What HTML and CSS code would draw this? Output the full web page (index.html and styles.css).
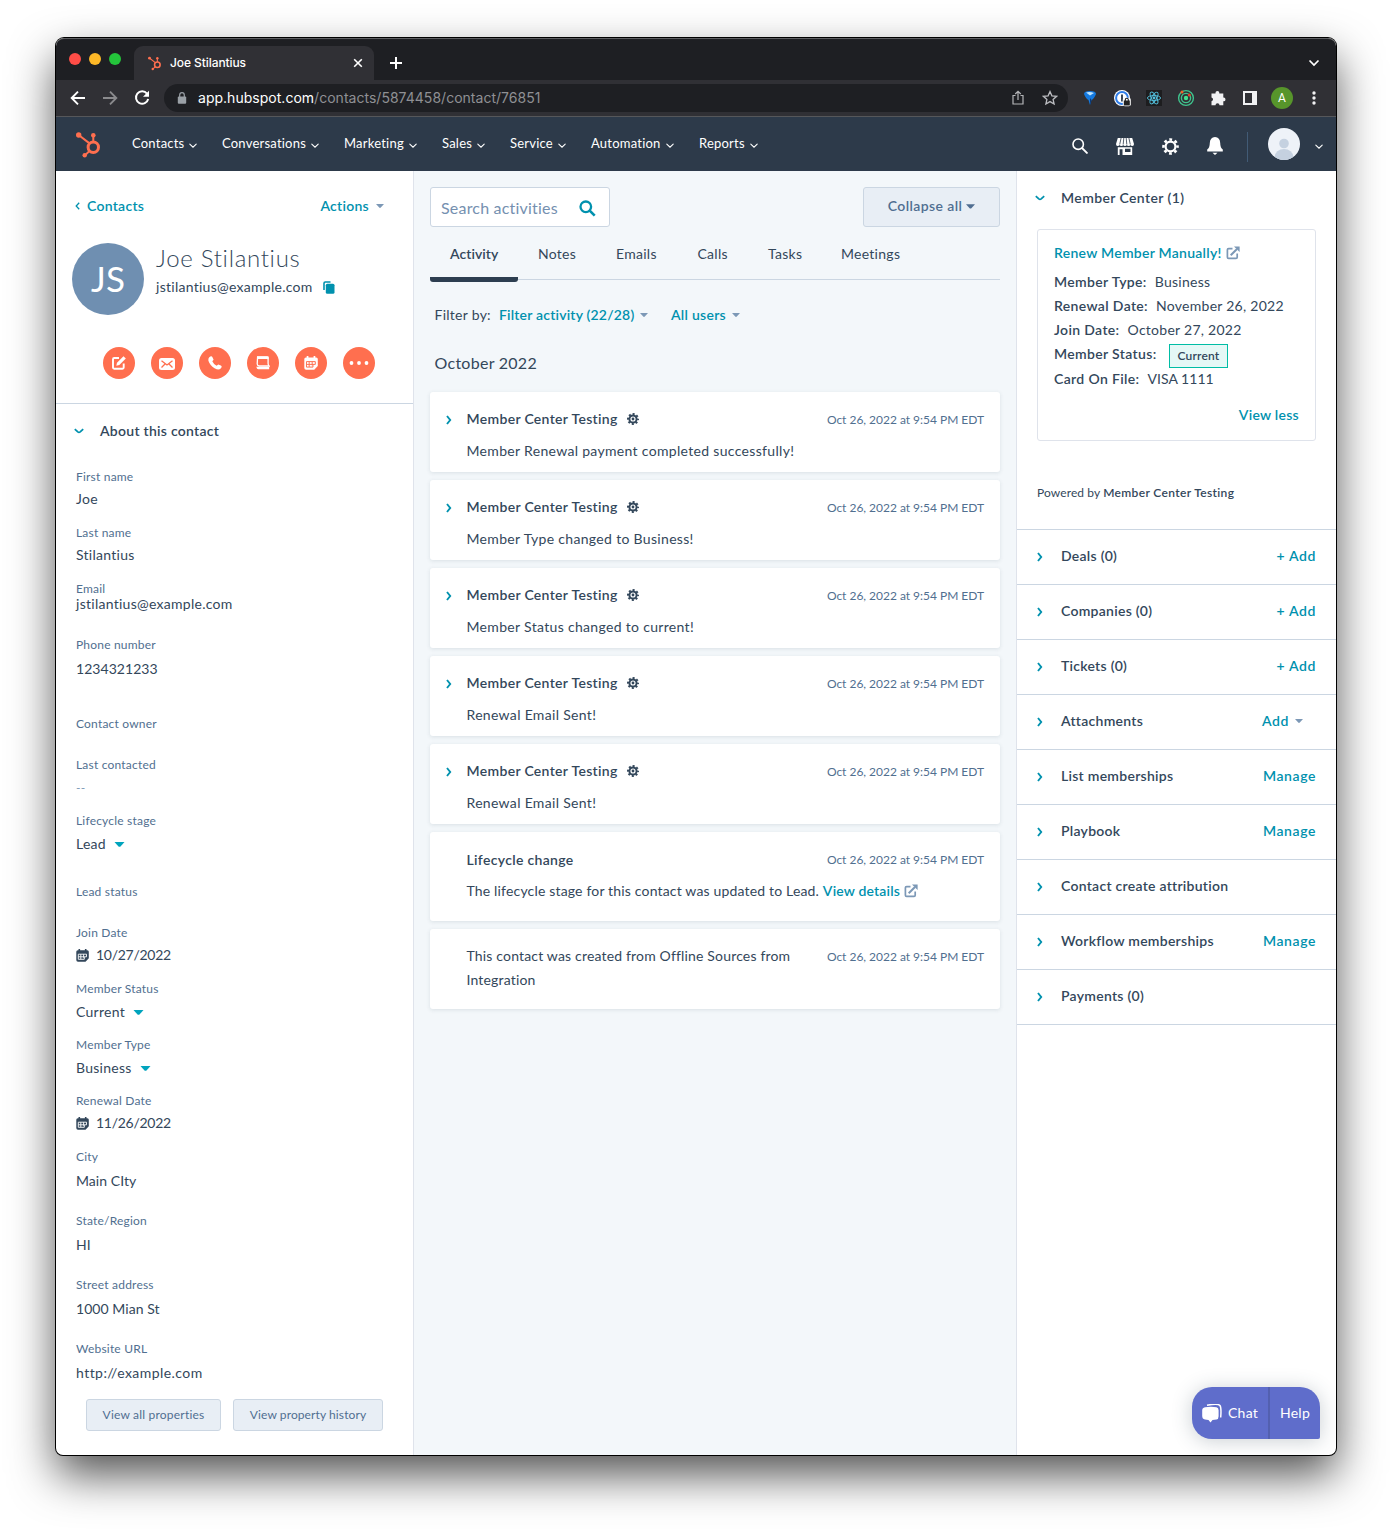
FILE: index.html
```html
<!DOCTYPE html>
<html lang="en">
<head>
<meta charset="utf-8">
<title>Joe Stilantius</title>
<link rel="stylesheet" href="styles.css">
</head>
<body>
<svg class="defs" width="0" height="0" aria-hidden="true">
  <symbol id="sprocket" viewBox="0 0 28 28"><g fill="none" stroke="#ff6f4f"><circle cx="19.3" cy="16.3" r="5.2" stroke-width="3"/><path d="M5 4.2l10.5 8.2M19.3 4.5V11M15.5 20l-4.6 4.4" stroke-width="2"/></g><g fill="#ff6f4f"><circle cx="4.7" cy="4" r="2.7"/><circle cx="19.3" cy="4.3" r="2.3"/><circle cx="10.7" cy="24.3" r="2.2"/></g></symbol>
  <symbol id="chev-down" viewBox="0 0 10 6"><path d="M.8 1.200L3.800 3.900Q5 4.900 6.200 3.900L9.200 1.200" fill="none" stroke="currentColor" stroke-width="1.800"/></symbol>
  <symbol id="nav-down" viewBox="0 0 8 6"><path d="M.8 1.200L4 4.200l3.200-3" fill="none" stroke="currentColor" stroke-width="1.100" stroke-linecap="round"/></symbol>
  <symbol id="chev-right" viewBox="0 0 6 10"><path d="M1 1l3.200 4L1 9" fill="none" stroke="currentColor" stroke-width="1.900"/></symbol>
  <symbol id="caret" viewBox="0 0 10 5"><path d="M0 0h10L6 4.400q-1 .9-2 0z" fill="currentColor"/></symbol>
  <symbol id="external" viewBox="0 0 14 14"><path d="M6.500 2.600H2.600Q1.400 2.600 1.400 3.800v7.400q0 1.200 1.200 1.200H10q1.200 0 1.200-1.200V7.600" fill="none" stroke="currentColor" stroke-width="1.700"/><path d="M4.700 9.300L11 3" stroke="currentColor" stroke-width="2"/><path d="M8 .4h5.600V6z" fill="currentColor"/></symbol>
  <symbol id="calendar" viewBox="0 0 13 13"><path d="M2.500 0h1.600v1.300h4.800V0h1.600v1.300h.8q1.500 0 1.500 1.500v6.400L9.500 12.700H2q-1.700 0-1.700-1.600V2.800q0-1.500 1.500-1.500h.7z" fill="currentColor"/><path d="M2.300 5.200h8.200v2.600H8.300v2.500h-6zM4.800 5.200v5M7.600 5.200v3.500M2.300 7.800h6" fill="none" stroke="var(--cut)" stroke-width=".9"/></symbol>
  <symbol id="cog" viewBox="0 0 12 12"><circle cx="6" cy="6" r="3.600" fill="none" stroke="currentColor" stroke-width="2"/><circle cx="6" cy="6" r="5" fill="none" stroke="currentColor" stroke-width="2" stroke-dasharray="2 1.927" stroke-dashoffset="1"/><circle cx="6" cy="6" r="1.400" fill="currentColor"/></symbol>
</svg>

<div class="window">
  <div class="tabstrip">
    <div class="lights"><i class="light red"></i><i class="light amber"></i><i class="light green"></i></div>
    <div class="browser-tab">
      <svg class="favicon"><use href="#sprocket"/></svg>
      <span class="browser-tab-title">Joe Stilantius</span>
      <svg width="10" height="10" viewBox="0 0 10 10"><path d="M1.200 1.200l7.600 7.600M8.800 1.200L1.200 8.800" stroke="#fff" stroke-width="1.600"/></svg>
    </div>
    <svg class="new-tab" width="12" height="12" viewBox="0 0 12 12"><path d="M6 0v12M0 6h12" stroke="#fff" stroke-width="2"/></svg>
    <svg class="tab-menu" width="12" height="8" viewBox="0 0 12 8"><path d="M1.500 1.500L6 6l4.500-4.500" fill="none" stroke="#fff" stroke-width="1.700"/></svg>
  </div>

  <div class="toolbar">
    <div class="slot"><svg width="16" height="16" viewBox="0 0 16 16"><path d="M15 8H2M8 1.700L1.700 8 8 14.300" fill="none" stroke="#fff" stroke-width="1.900"/></svg></div>
    <div class="slot"><svg width="16" height="16" viewBox="0 0 16 16"><path d="M1 8h13M8 1.700L14.300 8 8 14.300" fill="none" stroke="#8a8a8d" stroke-width="1.900"/></svg></div>
    <div class="slot"><svg width="16" height="16" viewBox="0 0 16 16"><path d="M13 3.600A6.200 6.200 0 1 0 14.200 9" fill="none" stroke="#fff" stroke-width="2"/><path d="M15 .8v6H9z" fill="#fff"/></svg></div>
    <div class="address">
      <svg width="10" height="12" viewBox="0 0 10 12"><rect x=".8" y="4.600" width="8.400" height="7.200" rx="1" fill="#9aa0a6"/><path d="M2.700 5V3a2.300 2.300 0 0 1 4.600 0v2" fill="none" stroke="#9aa0a6" stroke-width="1.200"/></svg>
      <span class="url"><b>app.hubspot.com</b>/contacts/5874458/contact/76851</span>
      <div class="slot"><svg width="14" height="16" viewBox="0 0 14 16"><path d="M4.500 5.500H2V14h10V5.500H9.500M7 10V1.500M4.200 4L7 1.300 9.800 4" fill="none" stroke="#b4b5b8" stroke-width="1.200"/></svg></div>
      <div class="slot"><svg width="16" height="16" viewBox="0 0 16 16"><path d="M8 1.600l1.900 4.200 4.700.5-3.500 3.100 1 4.600L8 11.600 3.900 14l1-4.600L1.400 6.300l4.700-.5z" fill="none" stroke="#bbbcc0" stroke-width="1.300"/></svg></div>
    </div>
    <div class="slot"><svg width="14" height="16" viewBox="0 0 14 16"><path d="M1 4Q1 1 7 1t6 3Q11 9 8.500 10L7 15 5.500 10Q3 9 1 4z" fill="#1479e0"/><path d="M3 2.500Q7 1.500 11 3L7 5.500z" fill="#bde4ff"/><path d="M7 8v7l1.500-5z" fill="#0b3977"/></svg></div>
    <div class="slot"><svg width="18" height="18" viewBox="0 0 18 18"><circle cx="9" cy="9" r="8" fill="#fff"/><circle cx="9" cy="9" r="5.900" fill="none" stroke="#2f7de8" stroke-width="2"/><path d="M9 5.500v7" stroke="#243447" stroke-width="1.800"/><rect x="9.800" y="8.800" width="8" height="8.400" rx="2" fill="#fff"/><rect x="10.800" y="11.500" width="6" height="5" fill="#222"/><path d="M12.300 12v-1.300a1.500 1.500 0 0 1 3 0V12" fill="none" stroke="#222" stroke-width="1.100"/></svg></div>
    <div class="slot"><svg width="16" height="16" viewBox="0 0 16 16"><path fill="#1d1d1f" d="M0 0h16v16H0z"/><g fill="none" stroke="#53c1de" stroke-width=".9"><ellipse cx="8" cy="8" rx="6.600" ry="2.500"/><ellipse cx="8" cy="8" rx="6.600" ry="2.500" transform="rotate(60 8 8)"/><ellipse cx="8" cy="8" rx="6.600" ry="2.500" transform="rotate(120 8 8)"/></g><circle cx="8" cy="8" r="1.400" fill="#53c1de"/></svg></div>
    <div class="slot"><svg width="18" height="18" viewBox="0 0 18 18"><g fill="none" stroke="#3fc38d"><circle cx="9" cy="9" r="7.400" stroke-width="1.400"/><circle cx="9" cy="9" r="4.600" stroke-width="1.400"/></g><circle cx="9" cy="9" r="2.200" fill="#43e08f"/><circle cx="5" cy="3" r="1.500" fill="#f2622a"/><circle cx="12.300" cy="6" r="1.500" fill="#e8402a"/></svg></div>
    <div class="slot"><svg width="16" height="16" viewBox="0 0 16 16"><path d="M1.500 3.500h4V2.800a1.900 1.900 0 0 1 3.800 0v.7h4v4h.3a1.900 1.900 0 0 1 0 3.800h-.3v4H9.500a2 2 0 0 0-4 0h-4v-4a2 2 0 0 0 0-3.900z" fill="#f1f1f3"/></svg></div>
    <div class="slot"><svg width="14" height="14" viewBox="0 0 14 14"><path d="M0 0h14v14H0zM2 2v10h7V2z" fill="#f1f1f3" fill-rule="evenodd"/></svg></div>
    <div class="slot"><span class="profile">A</span></div>
    <div class="slot"><svg width="4" height="14" viewBox="0 0 4 14"><g fill="#f1f1f3"><circle cx="2" cy="2" r="1.700"/><circle cx="2" cy="7" r="1.700"/><circle cx="2" cy="12" r="1.700"/></g></svg></div>
  </div>

  <nav class="nav">
    <svg class="logo"><use href="#sprocket"/></svg>
    <div class="menu">
      <a>Contacts<svg><use href="#nav-down"/></svg></a>
      <a>Conversations<svg><use href="#nav-down"/></svg></a>
      <a>Marketing<svg><use href="#nav-down"/></svg></a>
      <a>Sales<svg><use href="#nav-down"/></svg></a>
      <a>Service<svg><use href="#nav-down"/></svg></a>
      <a>Automation<svg><use href="#nav-down"/></svg></a>
      <a>Reports<svg><use href="#nav-down"/></svg></a>
    </div>
    <div class="nav-tools">
      <div class="tool"><svg width="16" height="16" viewBox="0 0 16 16"><circle cx="6.200" cy="6.200" r="5.200" fill="none" stroke="#fff" stroke-width="1.600"/><path d="M10 10l5.500 5.500" stroke="#fff" stroke-width="1.800"/></svg></div>
      <div class="tool"><svg width="18" height="17" viewBox="0 0 18 17"><path d="M1.800 0h14.400L18 6q0 2-1.600 2-1.400 0-1.900-1-.5 1-1.900 1t-1.800-1Q10.300 8 9 8T7.200 7Q6.700 8 5.400 8T3.500 7Q3 8 1.600 8 0 8 0 6zM1.800 9.200h14.400V17H1.800z" fill="#fff"/><path d="M5.100 0L3.700 6.500M7.800 0l-.6 6.500M10.200 0l.6 6.500M12.900 0l1.400 6.500" stroke="#2d3a4a" stroke-width=".8"/><path d="M3.600 11.200h2.900V17H3.600zM9 10.800h5.500V14H9z" fill="#2d3a4a"/></svg></div>
      <div class="tool gear"><svg width="17" height="17" viewBox="0 0 17 17"><circle cx="8.500" cy="8.500" r="4.900" fill="none" stroke="#fff" stroke-width="2.200"/><circle cx="8.500" cy="8.500" r="7" fill="none" stroke="#fff" stroke-width="2.600" stroke-dasharray="2.800 2.698" stroke-dashoffset="1.400"/></svg></div>
      <div class="tool"><svg width="16" height="18" viewBox="0 0 16 18"><path d="M8 0q5 .5 5.200 6 .1 5 2.600 6.500v2H.2v-2Q2.700 11 2.800 6 3 .5 8 0zM5.500 15.800h5L8 18z" fill="#fff"/></svg></div>
      <span class="nav-rule"></span>
      <svg class="user" width="32" height="32" viewBox="0 0 32 32"><clipPath id="round"><circle cx="16" cy="16" r="16"/></clipPath><g clip-path="url(#round)"><path fill="#eef2f8" d="M0 0h32v32H0z"/><circle cx="16" cy="15.500" r="4.800" fill="#c5d1e0"/><ellipse cx="16" cy="29" rx="9.300" ry="8" fill="#c5d1e0"/></g></svg>
      <svg class="user-caret"><use href="#nav-down"/></svg>
    </div>
  </nav>

  <div class="columns">
    <aside class="left">
      <div class="left-top">
        <a class="link back"><svg width="5" height="8" viewBox="0 0 5 8"><path d="M4.200.8L1.200 4l3 3.200" fill="none" stroke="currentColor" stroke-width="1.300"/></svg>Contacts</a>
        <a class="link actions">Actions<svg class="caret"><use href="#caret"/></svg></a>
      </div>
      <div class="person">
        <div class="avatar">JS</div>
        <div>
          <div class="name">Joe Stilantius</div>
          <div class="email">jstilantius@example.com<svg width="12" height="13" viewBox="0 0 12 13"><path d="M1 9V2.200Q1 1 2.200 1h5.300" fill="none" stroke="#0091ae" stroke-width="1.600"/><rect x="2.800" y="2.700" width="8.700" height="10" rx="1.500" fill="#0091ae"/></svg></div>
        </div>
      </div>
      <div class="quick">
        <span><svg width="16" height="16" viewBox="0 0 16 16"><path d="M8 3H3.200Q2 3 2 4.200v8.300Q2 13.700 3.200 13.700h8.300q1.200 0 1.200-1.200V8.500" fill="none" stroke="#fff" stroke-width="1.900"/><path d="M5.300 10.700l.7-3L12.500 1.200 14.800 3.500 8.300 10z" fill="#fff"/></svg></span>
        <span><svg class="mail" width="16" height="12" viewBox="0 0 16 12"><rect width="16" height="12" rx="2.500" fill="#fff"/><path d="M2.500 2.700L8 7l5.500-4.300M2.500 9.500L6 6M13.500 9.500L10 6" fill="none" stroke="#ff6f4f" stroke-width="1.300"/></svg></span>
        <span><svg width="14" height="14" viewBox="0 0 14 14"><path d="M1.300 1.200Q3.500-1 4.600 1.400L5.600 3.700 4.300 5.300Q5.500 8.200 8.600 9.700L10.300 8.400l2.500 1.200q1.800 1-.1 3-2 2-6.200-.3Q2 9.500.5 5 0 2.500 1.300 1.200z" fill="#fff"/></svg></span>
        <span><svg width="14" height="14" viewBox="0 0 14 14"><path d="M1.600 1h9.600q.9 0 .9 1v5.500q0 1.500 1 2.500H3.300Q1.400 10 1.200 8z" fill="none" stroke="#fff" stroke-width="1.300"/><path d="M1 .4h11.600v2.700H1zM.3 10.700h12.900v2.600H2.300q-1.500 0-2-2.600z" fill="#fff"/></svg></span>
        <span class="cal"><svg width="14" height="14"><use href="#calendar"/></svg></span>
        <span><svg width="20" height="4" viewBox="0 0 20 4"><g fill="#fff"><circle cx="2.500" cy="2" r="1.900"/><circle cx="10" cy="2" r="1.900"/><circle cx="17.500" cy="2" r="1.900"/></g></svg></span>
      </div>
      <div class="about"><svg class="chev-down"><use href="#chev-down"/></svg>About this contact</div>
      <div class="fields">
        <div class="field"><label>First name</label><p>Joe</p></div>
        <div class="field"><label>Last name</label><p>Stilantius</p></div>
        <div class="field tight"><label>Email</label><p>jstilantius@example.com</p></div>
        <div class="field phone"><label>Phone number</label><p>1234321233</p></div>
        <div class="field empty"><label>Contact owner</label></div>
        <div class="field select"><label>Last contacted</label><p class="none">--</p></div>
        <div class="field select stage"><label>Lifecycle stage</label><p>Lead<svg><use href="#caret"/></svg></p></div>
        <div class="field empty"><label>Lead status</label></div>
        <div class="field"><label>Join Date</label><p class="date"><svg><use href="#calendar"/></svg>10/27/2022</p></div>
        <div class="field select"><label>Member Status</label><p>Current<svg><use href="#caret"/></svg></p></div>
        <div class="field select"><label>Member Type</label><p>Business<svg><use href="#caret"/></svg></p></div>
        <div class="field"><label>Renewal Date</label><p class="date"><svg><use href="#calendar"/></svg>11/26/2022</p></div>
        <div class="field text"><label>City</label><p>Main CIty</p></div>
        <div class="field text"><label>State/Region</label><p>HI</p></div>
        <div class="field text"><label>Street address</label><p>1000 Mian St</p></div>
        <div class="field text last"><label>Website URL</label><p class="site">http://example.com</p></div>
      </div>
      <div class="buttons"><button class="btn view-all">View all properties</button><button class="btn view-history">View property history</button></div>
    </aside>

    <main class="middle">
      <div class="mid-top">
        <div class="search">Search activities<svg width="17" height="17" viewBox="0 0 17 17"><circle cx="6.800" cy="6.800" r="5.300" fill="none" stroke="#0091ae" stroke-width="2.300"/><path d="M10.700 10.700l5 5" stroke="#0091ae" stroke-width="2.600"/></svg></div>
        <button class="btn collapse">Collapse all<svg><use href="#caret"/></svg></button>
      </div>
      <div class="tabs"><a class="on">Activity</a><a>Notes</a><a>Emails</a><a>Calls</a><a>Tasks</a><a>Meetings</a></div>
      <div class="filters"><span class="by">Filter by:</span><a class="link f1">Filter activity (22/28)<svg class="caret"><use href="#caret"/></svg></a><a class="link">All users<svg class="caret"><use href="#caret"/></svg></a></div>
      <h2>October 2022</h2>
      <div class="cards">
        <article><svg class="chev-right"><use href="#chev-right"/></svg><div class="body"><header><b>Member Center Testing</b><svg class="cog"><use href="#cog"/></svg></header><p>Member Renewal payment completed successfully!</p></div><time>Oct 26, 2022 at 9:54 PM EDT</time></article>
        <article><svg class="chev-right"><use href="#chev-right"/></svg><div class="body"><header><b>Member Center Testing</b><svg class="cog"><use href="#cog"/></svg></header><p>Member Type changed to Business!</p></div><time>Oct 26, 2022 at 9:54 PM EDT</time></article>
        <article><svg class="chev-right"><use href="#chev-right"/></svg><div class="body"><header><b>Member Center Testing</b><svg class="cog"><use href="#cog"/></svg></header><p>Member Status changed to current!</p></div><time>Oct 26, 2022 at 9:54 PM EDT</time></article>
        <article><svg class="chev-right"><use href="#chev-right"/></svg><div class="body"><header><b>Member Center Testing</b><svg class="cog"><use href="#cog"/></svg></header><p>Renewal Email Sent!</p></div><time>Oct 26, 2022 at 9:54 PM EDT</time></article>
        <article><svg class="chev-right"><use href="#chev-right"/></svg><div class="body"><header><b>Member Center Testing</b><svg class="cog"><use href="#cog"/></svg></header><p>Renewal Email Sent!</p></div><time>Oct 26, 2022 at 9:54 PM EDT</time></article>
        <article class="lifecycle"><div class="body"><header><b>Lifecycle change</b><time>Oct 26, 2022 at 9:54 PM EDT</time></header><p>The lifecycle stage for this contact was updated to Lead. <a class="link">View details<svg class="ext"><use href="#external"/></svg></a></p></div></article>
        <article><div class="body created">This contact was created from Offline Sources from<br>Integration</div><time>Oct 26, 2022 at 9:54 PM EDT</time></article>
      </div>
    </main>

    <aside class="right">
      <section class="member">
        <h3><svg class="chev-down"><use href="#chev-down"/></svg>Member Center (1)</h3>
        <div class="member-card">
          <a class="link renew">Renew Member Manually!<svg class="ext"><use href="#external"/></svg></a>
          <p><b>Member Type:</b>Business</p>
          <p><b>Renewal Date:</b>November 26, 2022</p>
          <p><b>Join Date:</b>October 27, 2022</p>
          <p class="status"><b>Member Status:</b><span class="tag">Current</span></p>
          <p><b>Card On File:</b><span class="visa">VISA 1111</span></p>
          <a class="link less">View less</a>
        </div>
        <div class="powered">Powered by <b>Member Center Testing</b></div>
      </section>
      <div class="row"><svg class="chev-right"><use href="#chev-right"/></svg><b>Deals (0)</b><a class="link">+ Add</a></div>
      <div class="row"><svg class="chev-right"><use href="#chev-right"/></svg><b>Companies (0)</b><a class="link">+ Add</a></div>
      <div class="row"><svg class="chev-right"><use href="#chev-right"/></svg><b>Tickets (0)</b><a class="link">+ Add</a></div>
      <div class="row"><svg class="chev-right"><use href="#chev-right"/></svg><b>Attachments</b><a class="link attach">Add<svg class="caret"><use href="#caret"/></svg></a></div>
      <div class="row"><svg class="chev-right"><use href="#chev-right"/></svg><b>List memberships</b><a class="link">Manage</a></div>
      <div class="row"><svg class="chev-right"><use href="#chev-right"/></svg><b>Playbook</b><a class="link">Manage</a></div>
      <div class="row"><svg class="chev-right"><use href="#chev-right"/></svg><b>Contact create attribution</b></div>
      <div class="row"><svg class="chev-right"><use href="#chev-right"/></svg><b>Workflow memberships</b><a class="link">Manage</a></div>
      <div class="row"><svg class="chev-right"><use href="#chev-right"/></svg><b>Payments (0)</b></div>
    </aside>
  </div>

  <div class="chat">
    <span class="chat-btn"><svg width="20" height="19" viewBox="0 0 20 19"><path d="M5 1.200Q16-.8 18 1.500q1.500 2 .7 12" fill="none" stroke="#fff" stroke-width="1.500"/><path d="M3 3.200q6-1 11.500 0 2 .5 2.100 3v6q0 3-2.100 3.300l-4 .5L8.500 18.500 6.500 16 3 15.500Q.2 15 .2 12V6.200Q.2 3.700 3 3.200z" fill="#fff"/></svg>Chat</span>
    <span class="help-btn">Help</span>
  </div>
</div>
</body>
</html>
```
FILE: styles.css
```css
* { box-sizing: border-box; }
body {
  margin: 0;
  padding: 38px 56px 0;
  height: 1529px;
  overflow: hidden;
  background: #fff;
  font: 400 14px/20px Lato, "Liberation Sans", sans-serif;
  letter-spacing: .27px;
  color: #33475b;
}
svg { display: block; flex: none; }
.defs { position: absolute; }
p, h2, h3 { margin: 0; }
b { font-weight: 600; }

.window {
  position: relative;
  width: 1280px;
  height: 1417px;
  border-radius: 8px 8px 7px 7px;
  background: #fff;
  box-shadow: 0 0 0 1px #000, 0 20px 45px rgba(0, 0, 0, .68);
}

/* browser frame */
.tabstrip {
  display: flex;
  align-items: flex-end;
  height: 42px;
  border-top: 1px solid #5d5e61;
  border-radius: 8px 8px 0 0;
  background: #1e1f23;
}
.lights { display: flex; gap: 8px; width: 78px; padding: 0 0 15px 13px; }
.light { width: 12px; height: 12px; border-radius: 50%; }
.red { background: #ff4d47; }
.amber { background: #fdb827; }
.green { background: #24c43b; }
.browser-tab {
  display: flex;
  align-items: center;
  width: 240px;
  height: 34px;
  padding: 0 11px 0 13px;
  border-radius: 9px 9px 0 0;
  background: #303035;
}
.favicon { width: 15px; height: 15px; margin-right: 8px; }
.browser-tab-title { flex: 1; color: #fff; font: 500 12px/16px Inter, sans-serif; letter-spacing: -.08px; }
.new-tab { margin: 0 auto 11px 16px; }
.tab-menu { margin: 0 16px 13px 0; }
.toolbar {
  display: flex;
  align-items: center;
  height: 37px;
  padding: 0 6px;
  border-bottom: 1px solid #56575a;
  background: #303035;
}
.slot { display: flex; justify-content: center; align-items: center; width: 32px; flex: none; }
.address {
  display: flex;
  align-items: center;
  width: 904px;
  height: 28px;
  margin: 0 6px;
  padding: 0 2px 0 13px;
  border-radius: 14px;
  background: #1e1f23;
}
.url { flex: 1; margin-left: 11px; color: #8f9094; font: 400 14px/20px Inter, sans-serif; letter-spacing: .02px; }
.url b { color: #fff; font-weight: 400; }
.profile {
  width: 22px;
  height: 22px;
  border-radius: 50%;
  background: #57952b;
  color: #fff;
  font: 400 12px/22px Roboto, sans-serif;
  letter-spacing: 0;
  text-align: center;
}

/* app navigation */
.nav { display: flex; height: 54px; background: #2d3a4a; color: #fff; }
.logo { width: 28px; height: 28px; margin: 14px 0 0 18px; }
.menu {
  display: grid;
  grid-template-columns: 90px 122px 98px 68px 81px 108px 70px;
  margin: 16px auto 0 30px;
  font-size: 13px;
  line-height: 20px;
  letter-spacing: .22px;
}
.menu a { display: flex; gap: 5px; }
.menu svg { width: 8px; height: 6px; margin-top: 10px; }
.nav-tools { display: flex; padding-right: 13px; }
.tool { display: flex; align-items: center; justify-content: center; width: 45px; height: 58px; }
.gear { padding-left: 1px; }
.nav-rule { width: 1px; height: 30px; margin: 15px 20px 0 10px; background: #425b76; }
.user { margin-top: 11px; }
.user-caret { width: 8px; height: 6px; margin: 27px 0 0 15px; }

.columns { display: grid; grid-template-columns: 358px 602px 320px; height: 1284px; }
.link { color: #0091ae; font-weight: 600; }
.caret { width: 8px; height: 4px; color: #7c98b6; }
.chev-down { width: 10px; height: 6px; color: #0091ae; }
.chev-right { width: 6px; height: 10px; color: #0091ae; }
.ext { width: 14px; height: 14px; color: #7c98b6; }
.btn {
  padding: 0;
  border: 1px solid #cbd6e2;
  border-radius: 3px;
  background: #e8eef5;
  color: #506e91;
  font: 400 12px/20px Lato, sans-serif;
  letter-spacing: .2px;
}

/* contact summary */
.left { border-right: 1px solid #dfe3eb; }
.left-top { display: flex; justify-content: space-between; padding: 25px 29px 0 19px; }
.back, .actions { display: flex; align-items: center; gap: 7px; }
.person { display: flex; gap: 12px; padding: 27px 16px 0; }
.avatar {
  width: 72px;
  height: 72px;
  border-radius: 50%;
  background: #6f8fb1;
  color: #fff;
  font-size: 35px;
  line-height: 70px;
  letter-spacing: 0;
  text-align: center;
}
.name { font-size: 24px; font-weight: 300; line-height: 30px; letter-spacing: .7px; }
.email { display: flex; align-items: center; gap: 10px; margin-top: 4px; }
.quick { display: flex; gap: 16px; padding: 32px 0 24px 47px; border-bottom: 1px solid #cbd6e2; }
.quick span {
  display: flex;
  align-items: center;
  justify-content: center;
  width: 32px;
  height: 32px;
  border-radius: 50%;
  background: #ff6f4f;
}
.quick .mail { margin-top: 2px; }
.cal { color: #fff; --cut: #ff6f4f; }
.about { display: flex; align-items: center; gap: 16px; height: 54px; padding-left: 18px; font-weight: 600; }
.fields { padding: 10px 20px 0; }
.field { height: 56px; }
.field label { display: block; height: 18px; color: #516f90; font-size: 12px; line-height: 18px; letter-spacing: .2px; }
.field p { display: flex; align-items: center; gap: 8px; height: 20px; margin-top: 3px; }
.field svg { width: 11px; height: 5px; color: #00a4bd; }
.field .date { gap: 7px; letter-spacing: -.27px; }
.field .date svg { width: 13px; height: 13px; color: #33475b; --cut: #fff; }
.field .none { color: #7c98b6; font-size: 12px; }
.field .site { letter-spacing: .45px; }
.tight p { margin-top: -4px; }
.phone { height: 79px; }
.phone p, .text p { margin-top: 5px; letter-spacing: .05px; }
.select p { margin-top: 4px; }
.empty { height: 41px; }
.stage { height: 71px; }
.text { height: 64px; }
.last { height: 59px; }
.buttons { display: flex; gap: 12px; padding: 0 30px; }
.buttons .btn { height: 32px; }
.view-all { width: 135px; }
.buttons .view-history { width: 150px; letter-spacing: .1px; }

/* activity feed */
.middle { padding: 16px; background: #f3f7fa; }
.mid-top { display: flex; justify-content: space-between; }
.search {
  display: flex;
  align-items: center;
  justify-content: space-between;
  width: 180px;
  height: 40px;
  padding: 2px 13px 0 10px;
  border: 1px solid #cbd6e2;
  border-radius: 3px;
  background: #fff;
  color: #7590b0;
  font-size: 16px;
  letter-spacing: .2px;
}
.btn.collapse {
  display: flex;
  align-items: center;
  justify-content: center;
  gap: 4px;
  width: 137px;
  height: 40px;
  padding-bottom: 2px;
  font-size: 14px;
  font-weight: 600;
  letter-spacing: .4px;
}
.collapse svg { width: 9px; height: 5px; }
.tabs {
  display: grid;
  grid-template-columns: 88px 78px 81.5px 70.5px 73px 1fr;
  height: 53px;
  border-bottom: 1px solid #cbd6e2;
}
.tabs a { height: 55px; padding: 17px 0 0 20px; }
.tabs .on { border-bottom: 5px solid #2d3e50; border-radius: 3px; font-weight: 600; letter-spacing: .05px; }
.filters { display: flex; padding: 25px 0 0 4.5px; }
.filters .by { width: 64.5px; }
.filters .f1 { width: 172px; letter-spacing: .2px; }
.filters a { display: flex; align-items: center; gap: 6px; }
h2 { padding: 26px 0 0 4.5px; font-size: 16px; font-weight: 400; line-height: 24px; }
.cards { display: grid; gap: 8px; margin-top: 17px; }
article {
  display: flex;
  height: 80px;
  padding: 15px 16px 0 36.500px;
  border-radius: 3px;
  background: #fff;
  box-shadow: 0 1px 4px rgba(45, 62, 80, .12);
  line-height: 24px;
  letter-spacing: .32px;
}
article .chev-right { margin: 8px 14.500px 0 -20.500px; }
.body { flex: 1; white-space: nowrap; }
.body header { display: flex; align-items: center; gap: 9px; }
.body header time { margin-left: auto; }
.body p { margin-top: 8px; }
.lifecycle { height: 89px; }
.lifecycle p, .created { letter-spacing: .17px; }
.lifecycle p { margin-top: 6px; }
.cog { width: 12px; height: 12px; }
.body .ext { display: inline-block; margin-left: 4px; vertical-align: -2px; }
time { color: #516f90; font-size: 12px; line-height: 26px; letter-spacing: -.02px; }

/* associations */
.right { border-left: 1px solid #dfe3eb; }
.member { height: 359px; padding: 17px 20px 0; border-bottom: 1px solid #cbd6e2; }
h3 { display: flex; align-items: center; gap: 16px; margin-left: -2px; font-size: 14px; font-weight: 600; line-height: 20px; letter-spacing: .4px; }
.member-card { height: 212px; margin-top: 21px; padding: 11px 16px; border: 1px solid #dfe3eb; border-radius: 3px; line-height: 24px; }
.renew { display: flex; align-items: center; gap: 4px; margin-bottom: 5px; }
.member-card b { margin-right: 8px; letter-spacing: .35px; }
.status { display: flex; height: 25px; }
.visa { letter-spacing: .05px; }
.tag {
  height: 24px;
  margin: 2px 0 0 4px;
  padding: 0 8px;
  border: 1px solid #00bda5;
  background: #e5f8f6;
  font-size: 12px;
  font-weight: 600;
  line-height: 22px;
  letter-spacing: .15px;
}
.less { display: block; margin-top: 12px; text-align: right; }
.powered { margin-top: 42px; font-size: 12px; letter-spacing: .1px; }
.powered b { letter-spacing: .35px; }
.row { display: flex; align-items: center; height: 55px; padding: 0 20px 2px; border-bottom: 1px solid #cbd6e2; }
.row .chev-right { margin: 2px 18px 0 0; }
.row .link { margin-left: auto; letter-spacing: .6px; }
.row .attach { display: flex; align-items: center; gap: 6px; margin-right: 13px; }

/* floating help widget, sits over the page corner */
.chat {
  position: absolute;
  right: 16px;
  bottom: 16px;
  display: flex;
  width: 128px;
  height: 52px;
  border-radius: 20px 20px 2px 20px;
  background: #5f6dcb;
  box-shadow: 0 2px 20px rgba(45, 62, 80, .25);
  color: #fff;
  line-height: 52px;
}
.chat-btn { display: flex; align-items: center; gap: 6px; width: 76px; padding-left: 10px; }
.help-btn { flex: 1; border-left: 2px solid #5360b0; text-align: center; }
```
